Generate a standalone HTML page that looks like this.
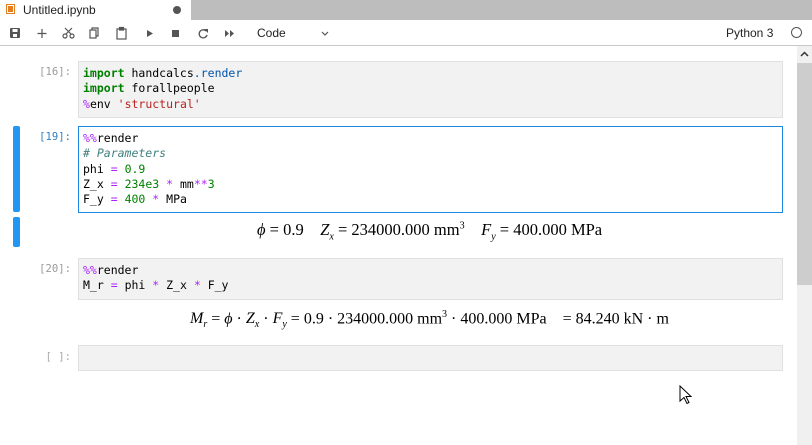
<!DOCTYPE html><html><head><style>
body{margin:0;width:812px;height:445px;overflow:hidden;background:#fff;font-family:"Liberation Sans",sans-serif;position:relative}
.a{position:absolute}
.code{font-family:"DejaVu Sans Mono","Liberation Mono",monospace;font-size:11.5px;line-height:15.3px;color:#000;white-space:pre}
.box{position:absolute;left:78px;width:703px;background:#f2f2f2;border:1px solid #e0e0e0}
.p{position:absolute;left:20px;width:51px;text-align:right;font-family:"DejaVu Sans Mono",monospace;font-size:10.6px;color:#999}
.k{color:#008000;font-weight:bold}.o{color:#aa22ff}.n{color:#008000}.c{color:#408080;font-style:italic}.s{color:#ba2121}.b{color:#0055aa}
.m{font-family:"Liberation Serif",serif;font-size:16px;white-space:nowrap}
.m i{font-style:italic}
.bar{position:absolute;left:13px;width:7px;background:#2196f3;border-radius:2px}
</style></head><body>
<div class="a" style="left:0;top:0;width:812px;height:20px;background:#bdbdbd"></div>
<div class="a" style="left:0;top:0;width:191px;height:21px;background:#fff"></div>
<div class="a" style="left:6px;top:4px;width:9px;height:10px;border:1px solid #e67e22;box-sizing:border-box;background:#fff"><div style="margin:1px;height:6px;background:#e67e22"></div></div>
<div class="a" style="left:23px;top:3px;font-size:12px;color:#222">Untitled.ipynb</div>
<div class="a" style="left:173px;top:6px;width:8px;height:8px;border-radius:50%;background:#555"></div>
<div class="a" style="left:0;top:45px;width:812px;height:1px;background:#c8c8c8"></div>
<svg class="a" style="left:0;top:20px" width="360" height="26" fill="#555" stroke="#555">
<rect x="10" y="8" width="10" height="10" rx="1" stroke="none"/><rect x="12.5" y="9" width="5" height="3" fill="#fff" stroke="none"/><rect x="13" y="14" width="4" height="3" fill="#fff" stroke="none"/>
<path d="M42 9v9M37.5 13.5h9" fill="none" stroke-width="1.2"/>
<g fill="none" stroke-width="1.2"><circle cx="65" cy="16" r="2"/><circle cx="72" cy="16" r="2"/><path d="M66 14l6-6M71 14l-6-6"/></g>
<g fill="none" stroke-width="1.2"><rect x="90" y="10" width="6" height="8"/><path d="M92 10V8h6v8h-2"/></g>
<g fill="none" stroke-width="1.2"><rect x="117" y="9" width="9" height="10"/><rect x="119.5" y="7.5" width="4" height="2.5" fill="#555"/></g>
<path d="M147 10l6 3.5-6 3.5z" stroke="none"/>
<rect x="172" y="10" width="7" height="7" stroke="none"/>
<path d="M206 11a4 4 0 1 0 1 4" fill="none" stroke-width="1.3"/><path d="M204 9h4v4z" stroke="none"/>
<path d="M225 10l4 3.5-4 3.5zM230 10l4 3.5-4 3.5z" stroke="none"/>
<path d="M322 12l3 3 3-3" fill="none" stroke-width="1.2"/>
</svg>
<div class="a" style="left:257px;top:26px;font-size:12px;color:#222">Code</div>
<div class="a" style="left:726px;top:26px;font-size:12px;color:#222">Python 3</div>
<div class="a" style="left:791px;top:27px;width:9px;height:9px;border:1.3px solid #555;border-radius:50%"></div>
<div class="a" style="left:797px;top:46px;width:15px;height:399px;background:#f0f0f0"></div>
<div class="a" style="left:797px;top:63px;width:15px;height:222px;background:#cdcdcd"></div>
<svg class="a" style="left:797px;top:47px" width="15" height="15"><path d="M4 9l3.5-3.5L11 9" fill="none" stroke="#333" stroke-width="1.5"/></svg>

<div class="p" style="top:66px">[16]:</div>
<div class="box" style="top:61px;height:55px"></div>
<div class="a code" style="left:83px;top:66px"><span class="k">import</span> handcalcs<span class="b">.render</span>
<span class="k">import</span> forallpeople
<span class="o">%</span>env <span class="s">'structural'</span></div>

<div class="bar" style="top:126px;height:86px"></div>
<div class="p" style="top:131px;color:#307fc1">[19]:</div>
<div class="box" style="top:126px;height:85px;background:#fff;border-color:#1e88e5"></div>
<div class="a code" style="left:83px;top:131px"><span class="o">%%</span>render
<span class="c"># Parameters</span>
phi <span class="o">=</span> <span class="n">0.9</span>
Z_x <span class="o">=</span> <span class="n">234e3</span> <span class="o">*</span> mm<span class="o">**</span><span class="n">3</span>
F_y <span class="o">=</span> <span class="n">400</span> <span class="o">*</span> MPa</div>
<div class="bar" style="top:217px;height:30px"></div>
<div class="a m" style="left:257px;top:220px;font-size:16.5px"><i>ϕ</i> = 0.9 &nbsp;&nbsp; <i>Z<sub style="font-size:10px">x</sub></i> = 234000.000 mm<sup style="font-size:10px">3</sup> &nbsp;&nbsp; <i>F<sub style="font-size:10px">y</sub></i> = 400.000 MPa</div>

<div class="p" style="top:263px">[20]:</div>
<div class="box" style="top:258px;height:40px"></div>
<div class="a code" style="left:83px;top:263px"><span class="o">%%</span>render
M_r <span class="o">=</span> phi <span class="o">*</span> Z_x <span class="o">*</span> F_y</div>
<div class="a m" style="left:190px;top:309px"><i>M<sub style="font-size:10px">r</sub></i> = <i>ϕ</i> · <i>Z<sub style="font-size:10px">x</sub></i> · <i>F<sub style="font-size:10px">y</sub></i> = 0.9 · 234000.000 mm<sup style="font-size:10px">3</sup> · 400.000 MPa &nbsp;&nbsp; = 84.240 kN · m</div>

<div class="p" style="top:351px;color:#aaa">[ ]:</div>
<div class="box" style="top:345px;height:24px"></div>
<svg class="a" style="left:679px;top:385px" width="14" height="20"><path d="M1 1v15l4-3.5 3 6 2-1-3-6h5z" fill="#fff" stroke="#000" stroke-width="1"/></svg>
</body></html>
